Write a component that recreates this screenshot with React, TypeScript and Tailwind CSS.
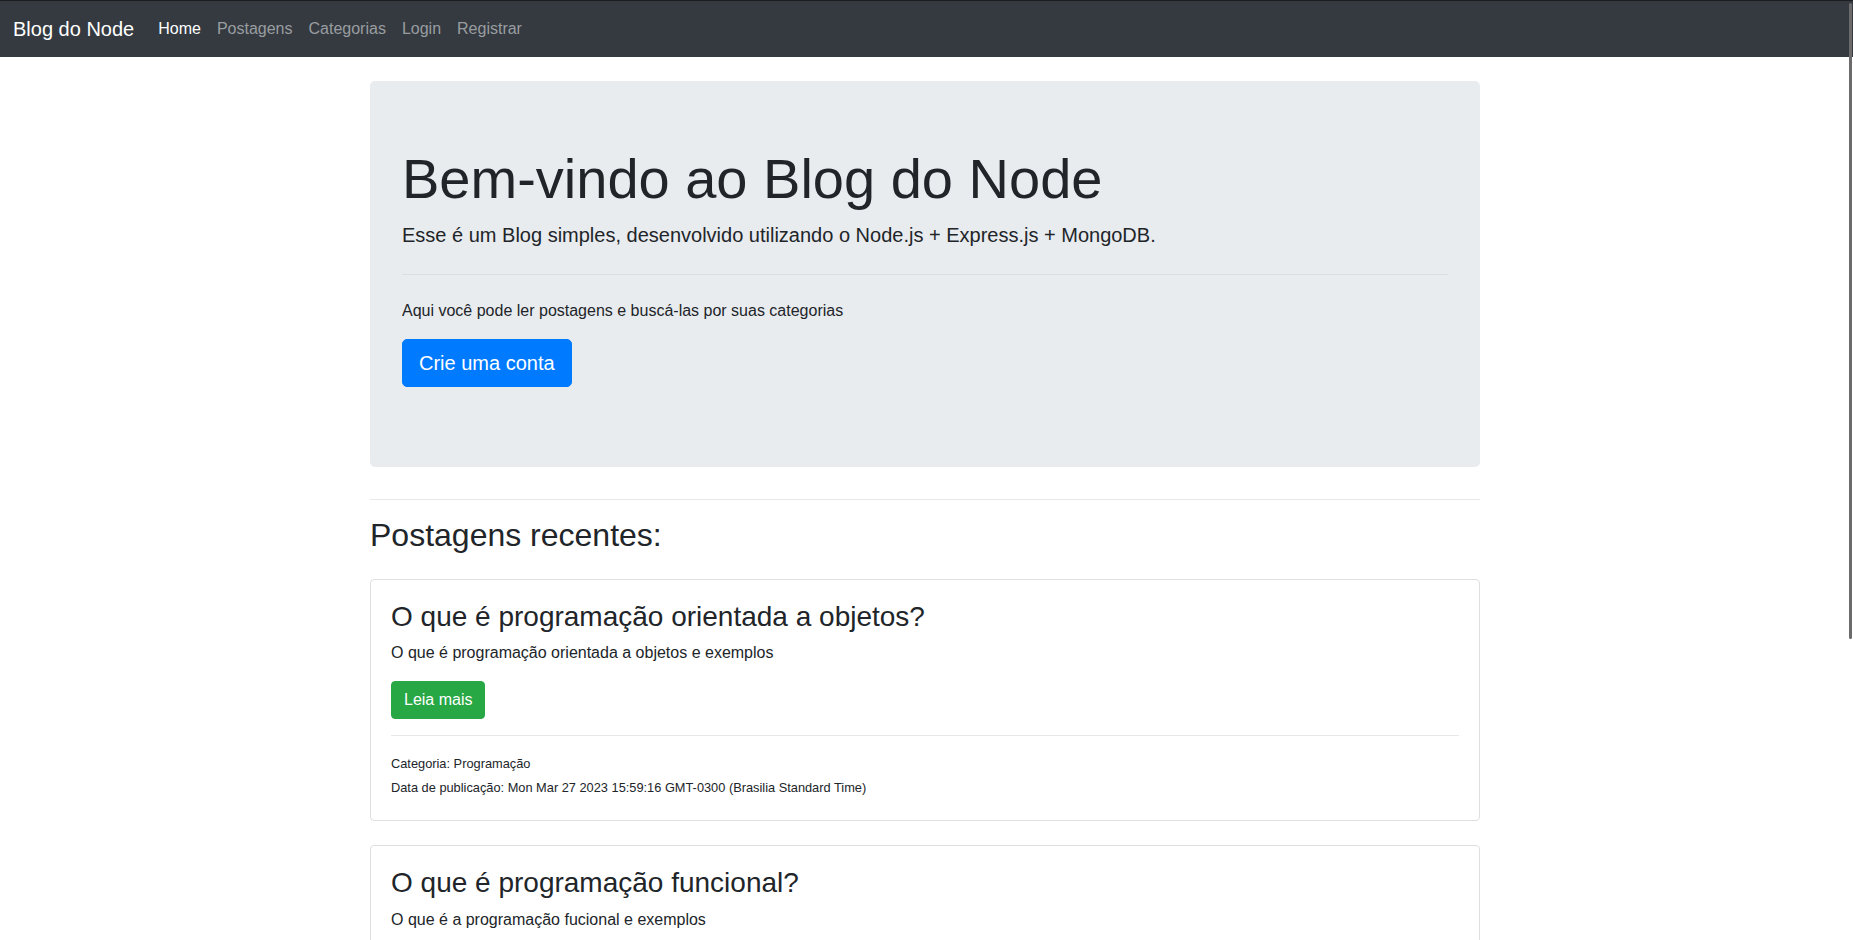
import React from 'react';

const navLinks = [
  { label: 'Home', active: true },
  { label: 'Postagens', active: false },
  { label: 'Categorias', active: false },
  { label: 'Login', active: false },
  { label: 'Registrar', active: false },
];

const posts = [
  {
    title: 'O que é programação orientada a objetos?',
    description: 'O que é programação orientada a objetos e exemplos',
    category: 'Programação',
    date: 'Mon Mar 27 2023 15:59:16 GMT-0300 (Brasilia Standard Time)',
  },
  {
    title: 'O que é programação funcional?',
    description: 'O que é a programação fucional e exemplos',
    category: 'Programação',
    date: 'Mon Mar 27 2023 16:02:41 GMT-0300 (Brasilia Standard Time)',
  },
];

export default function App() {
  return (
    <div
      className="relative h-[940px] overflow-hidden bg-white text-[#212529] text-base leading-6"
      style={{ fontFamily: '"Liberation Sans", Arial, sans-serif' }}
    >
      {/* Navbar */}
      <nav className="flex items-center h-[57px] border-t border-[#1b1d20] bg-[#343a40] px-[13px]">
        <a className="text-[20px] leading-[30px] text-white mr-4">Blog do Node</a>
        <ul className="flex items-center">
          {navLinks.map((link) => (
            <li key={link.label}>
              <a className={`block px-2 py-2 ${link.active ? 'text-white' : 'text-[#9a9da0]'}`}>
                {link.label}
              </a>
            </li>
          ))}
        </ul>
      </nav>

      <div className="mr-[3px]">
        <div className="mx-auto w-[1140px] px-[15px] pt-6">
          {/* Jumbotron */}
          <div className="rounded-[5px] bg-[#e9ecef] px-8 py-16 mb-8">
            <h1 className="text-[56px] leading-[1.2] font-normal mb-2">Bem-vindo ao Blog do Node</h1>
            <p className="text-[20px] leading-[30px] font-normal mb-4">
              Esse é um Blog simples, desenvolvido utilizando o Node.js + Express.js + MongoDB.
            </p>
            <hr className="my-6 border-t border-[#dcdee1]" />
            <p className="mb-4">Aqui você pode ler postagens e buscá-las por suas categorias</p>
            <p className="text-[20px] leading-[30px] mb-4">
              <a className="inline-block rounded-[5px] border border-[#007bff] bg-[#007bff] px-4 py-2 text-white">
                Crie uma conta
              </a>
            </p>
          </div>

          <hr className="mb-4 border-t border-[#e8e8e8]" />
          <h2 className="text-[32px] leading-[1.2] font-normal mb-2">Postagens recentes:</h2>

          {posts.map((post) => (
            <div key={post.title} className="mt-6 rounded border border-[#dfdfdf] p-5">
              <h3 className="text-[28px] leading-[1.2] font-normal mb-2">{post.title}</h3>
              <p className="mb-4">{post.description}</p>
              <p className="mb-4">
                <a className="inline-block rounded border border-[#28a745] bg-[#28a745] px-3 py-[6px] text-white">
                  Leia mais
                </a>
              </p>
              <hr className="my-4 border-t border-[#e8e8e8]" />
              <p className="text-[12.8px] leading-6">
                Categoria: {post.category}
                <br />
                Data de publicação: {post.date}
              </p>
            </div>
          ))}
        </div>
      </div>

      {/* overlay scrollbar thumb */}
      <div className="absolute right-[1px] top-[3px] h-[636px] w-[3px] rounded-full bg-[#6b6b6b]" />
    </div>
  );
}
